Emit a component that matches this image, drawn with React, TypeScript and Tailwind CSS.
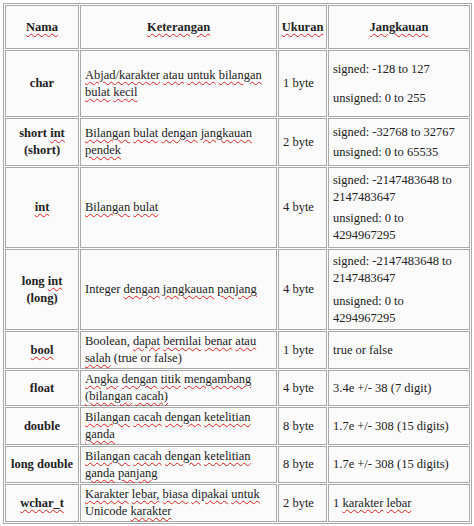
import React from "react";

const S = ({ children }: { children: React.ReactNode }) => (
  <span className="underline decoration-wavy decoration-[#e02020] decoration-1 underline-offset-2">{children}</span>
);

type Row = {
  h: number;
  nama: React.ReactNode;
  ket: React.ReactNode;
  uk: string;
  jang: React.ReactNode;
};

const rows: Row[] = [
  {
    h: 68,
    nama: "char",
    ket: (
      <>
        <S>Abjad/karakter</S> <S>atau</S> <S>untuk</S> <S>bilangan</S> <S>bulat</S> <S>kecil</S>
      </>
    ),
    uk: "1 byte",
    jang: (
      <div className="flex flex-col gap-[12px]">
        <div>signed: -128 to 127</div>
        <div>unsigned: 0 to 255</div>
      </div>
    ),
  },
  {
    h: 49,
    nama: (
      <>
        short <S>int</S>
        <br />
        (short)
      </>
    ),
    ket: (
      <>
        <S>Bilangan</S> <S>bulat</S> <S>dengan</S> <S>jangkauan</S> <S>pendek</S>
      </>
    ),
    uk: "2 byte",
    jang: (
      <div className="flex flex-col gap-[3px]">
        <div>signed: -32768 to 32767</div>
        <div>unsigned: 0 to 65535</div>
      </div>
    ),
  },
  {
    h: 82,
    nama: <S>int</S>,
    ket: (
      <>
        <S>Bilangan</S> <S>bulat</S>
      </>
    ),
    uk: "4 byte",
    jang: (
      <div className="flex flex-col gap-[4px]">
        <div>signed: -2147483648 to 2147483647</div>
        <div>unsigned: 0 to 4294967295</div>
      </div>
    ),
  },
  {
    h: 82,
    nama: (
      <>
        long <S>int</S>
        <br />
        (long)
      </>
    ),
    ket: (
      <>
        Integer <S>dengan</S> <S>jangkauan</S> <S>panjang</S>
      </>
    ),
    uk: "4 byte",
    jang: (
      <div className="flex flex-col gap-[6px]">
        <div>signed: -2147483648 to 2147483647</div>
        <div>unsigned: 0 to 4294967295</div>
      </div>
    ),
  },
  {
    h: 39,
    nama: <S>bool</S>,
    ket: (
      <>
        Boolean, <S>dapat</S> <S>bernilai</S> <S>benar</S> <S>atau</S> <S>salah</S> (true or false)
      </>
    ),
    uk: "1 byte",
    jang: "true or false",
  },
  {
    h: 37,
    nama: "float",
    ket: (
      <>
        <S>Angka</S> <S>dengan</S> <S>titik</S> <S>mengambang</S> <S>(bilangan</S> <S>cacah)</S>
      </>
    ),
    uk: "4 byte",
    jang: "3.4e +/- 38 (7 digit)",
  },
  {
    h: 39,
    nama: "double",
    ket: (
      <>
        <S>Bilangan</S> <S>cacah</S> <S>dengan</S> <S>ketelitian</S> <S>ganda</S>
      </>
    ),
    uk: "8 byte",
    jang: "1.7e +/- 308 (15 digits)",
  },
  {
    h: 38,
    nama: "long double",
    ket: (
      <>
        <S>Bilangan</S> <S>cacah</S> <S>dengan</S> <S>ketelitian</S> <S>ganda</S> <S>panjang</S>
      </>
    ),
    uk: "8 byte",
    jang: "1.7e +/- 308 (15 digits)",
  },
  {
    h: 39,
    nama: <S>wchar_t</S>,
    ket: (
      <>
        <S>Karakter</S> <S>lebar,</S> <S>biasa</S> <S>dipakai</S> <S>untuk</S> Unicode <S>karakter</S>
      </>
    ),
    uk: "2 byte",
    jang: (
      <>
        1 <S>karakter</S> <S>lebar</S>
      </>
    ),
  },
];

const cell = "border border-[#a9a9a9] bg-[#fbfbfb] align-middle";

export default function App() {
  return (
    <div className="w-[474px] h-[526px] bg-white pt-[3px] pl-[3px] text-[#222] text-[12.5px] leading-[17px]" style={{ fontFamily: '"Liberation Serif", serif' }}>
      <table className="border-separate border-spacing-[1px] border border-[#a9a9a9] w-[469px] table-fixed">
        <colgroup>
          <col className="w-[74px]" />
          <col className="w-[197px]" />
          <col className="w-[49px]" />
          <col className="w-[142px]" />
        </colgroup>
        <thead>
          <tr className="h-[44px]">
            <th className={`${cell} font-bold text-center`}><S>Nama</S></th>
            <th className={`${cell} font-bold text-center`}><S>Keterangan</S></th>
            <th className={`${cell} font-bold text-center`}><S>Ukuran</S></th>
            <th className={`${cell} font-bold text-center`}><S>Jangkauan</S></th>
          </tr>
        </thead>
        <tbody>
          {rows.map((r, i) => (
            <tr key={i} style={{ height: r.h - 1 }}>
              <td className={`${cell} font-bold text-center px-[2px]`}>{r.nama}</td>
              <td className={`${cell} px-[4px]`}>{r.ket}</td>
              <td className={`${cell} px-[4px]`}>{r.uk}</td>
              <td className={`${cell} px-[4px]`}>{r.jang}</td>
            </tr>
          ))}
        </tbody>
      </table>
    </div>
  );
}
